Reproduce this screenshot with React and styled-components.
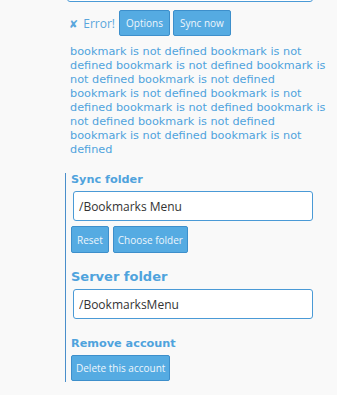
import styled, { createGlobalStyle } from "styled-components";

const Global = createGlobalStyle`
  body {
    margin: 0;
    background: #f9f9f9;
    font-family: "Open Sans", "DejaVu Sans", sans-serif;
  }
`;

const Page = styled.div`
  width: 337px;
  height: 395px;
  overflow: hidden;
  padding-left: 67px;
  box-sizing: border-box;
`;

const TextInput = styled.input`
  display: block;
  box-sizing: border-box;
  width: 240px;
  height: 30px;
  margin-left: ${(p) => p.$indent || 0}px;
  margin-top: ${(p) => p.$top || 0}px;
  padding: 0 5px;
  border: 1px solid #4a9ad6;
  border-radius: 3px;
  background: #fff;
  color: #333;
  font-family: "Open Sans", sans-serif;
  font-size: 12px;
  outline: none;
`;

const TopInput = styled(TextInput)`
  width: 246px;
  margin-top: -28px;
`;

const ErrorRow = styled.div`
  display: flex;
  align-items: center;
  gap: 3px;
  margin-top: 8px;
  padding-left: 2px;
`;

const ErrorText = styled.span`
  color: #5aa6dc;
  font-size: 12px;
  margin-right: 1px;
  span {
    font-size: 11px;
    margin-right: 5px;
  }
`;

const Button = styled.button`
  height: ${(p) => p.$h || 26}px;
  padding: 0 ${(p) => p.$pad || 5}px;
  background: #55abe2;
  border: 1px solid #3d8fcb;
  border-radius: 2px;
  color: #eef6fc;
  font-family: "Open Sans", sans-serif;
  font-size: 10px;
  cursor: pointer;
`;

const Message = styled.p`
  margin: 9px 0 0 3px;
  width: 262px;
  color: #4fa3dd;
  font-family: "DejaVu Sans", sans-serif;
  font-size: 11.25px;
  line-height: 14px;
`;

const Section = styled.div`
  margin-top: 16px;
  margin-left: -2px;
  padding: 0 0 1px 5px;
  border-left: 1px solid #4a8fcb;
`;

const Label = styled.div`
  color: #4fa3dd;
  font-family: "DejaVu Sans", sans-serif;
  font-weight: bold;
  font-size: ${(p) => p.$size || 11.25}px;
  margin-top: ${(p) => p.$top || 0}px;
  line-height: ${(p) => (p.$size ? p.$size + 3 : 14)}px;
`;

const ButtonRow = styled.div`
  display: flex;
  gap: 4px;
  margin-top: ${(p) => p.$top || 5}px;
`;

export default function App() {
  const msg = Array(12).fill("bookmark is not defined").join(" ");
  return (
    <Page>
      <Global />
      <TopInput readOnly value="" />
      <ErrorRow>
        <ErrorText>
          <span>✘</span>Error!
        </ErrorText>
        <Button $pad={6}>Options</Button>
        <Button $pad={6}>Sync now</Button>
      </ErrorRow>
      <Message>{msg}</Message>
      <Section>
        <Label>Sync folder</Label>
        <TextInput $indent={2} $top={4} readOnly value="/Bookmarks Menu" />
        <ButtonRow>
          <Button $pad={5} $h={27}>Reset</Button>
          <Button $pad={4} $h={27}>Choose folder</Button>
        </ButtonRow>
        <Label $size={13} $top={16}>Server folder</Label>
        <TextInput $indent={2} $top={4} readOnly value="/BookmarksMenu" />
        <Label $top={18}>Remove account</Label>
        <ButtonRow $top={4}>
          <Button $pad={4}>Delete this account</Button>
        </ButtonRow>
      </Section>
    </Page>
  );
}
